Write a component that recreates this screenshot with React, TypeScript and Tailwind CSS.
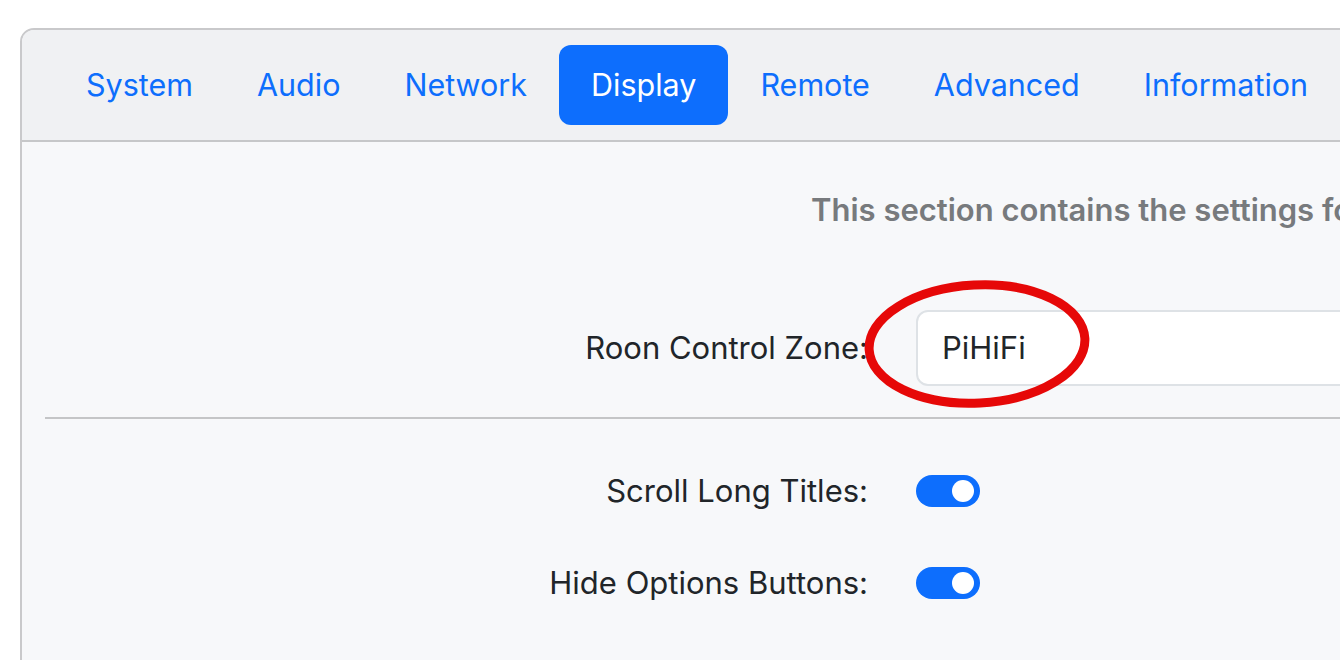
import React from 'react';

const tabs = ['System', 'Audio', 'Network', 'Display', 'Remote', 'Advanced', 'Information'];

function Toggle() {
  return (
    <div className="w-[64px] h-[32px] rounded-full bg-[#0d6efd] flex items-center justify-end pr-[6px]">
      <div className="w-[22px] h-[22px] rounded-full bg-white" />
    </div>
  );
}

function Row({ label, children }: { label: string; children: React.ReactNode }) {
  return (
    <div className="flex items-center">
      <div className="w-[846px] shrink-0 text-right text-[31px] leading-[48px] text-[#212529]">{label}</div>
      <div className="ml-[48px] flex-1">{children}</div>
    </div>
  );
}

export default function App() {
  return (
    <div
      className="relative w-[1340px] h-[660px] overflow-hidden bg-white"
      style={{ fontFamily: 'Inter, "Noto Sans", sans-serif' }}
    >
      <div className="ml-[20px] mt-[28px] w-[1400px] h-[700px] border-2 border-[#c9c9cb] rounded-[14px] overflow-hidden bg-[#f7f8fa]">
        <div className="bg-[#f0f1f3] border-b-2 border-[#c6c7c9] px-[32px] py-[15px]">
          <div className="flex">
            {tabs.map((tab) => (
              <div
                key={tab}
                className={
                  tab === 'Display'
                    ? 'px-[32px] py-[16px] text-[30.5px] leading-[48px] rounded-[12px] bg-[#0d6efd] text-white'
                    : 'px-[32px] py-[16px] text-[30.5px] leading-[48px] text-[#0d6efd]'
                }
              >
                {tab}
              </div>
            ))}
          </div>
        </div>

        <div className="pt-[44px]">
          <div className="pl-[789px] whitespace-nowrap text-[31px] leading-[48px] font-semibold text-[#777a7d]">
            This section contains the settings for the display of the Roon Now Playing screen.
          </div>

          <div className="mt-[76px]">
            <Row label="Roon Control Zone:">
              <div className="h-[76px] bg-white border-2 border-[#dee2e6] rounded-[12px] flex items-center pl-[24px] text-[31px] text-[#212529]">
                PiHiFi
              </div>
            </Row>
          </div>

          <div className="ml-[23px] mt-[31px] h-[2px] bg-[#c4c5c7]" />

          <div className="mt-[48px]">
            <Row label="Scroll Long Titles:">
              <Toggle />
            </Row>
          </div>
          <div className="mt-[44px]">
            <Row label="Hide Options Buttons:">
              <Toggle />
            </Row>
          </div>
        </div>
      </div>

      <svg className="absolute left-[860px] top-[278px]" width="234" height="132" viewBox="0 0 234 132">
        <ellipse cx="117" cy="66" rx="108" ry="59" fill="none" stroke="#e60808" strokeWidth="9" transform="rotate(-3 117 66)" />
      </svg>
    </div>
  );
}
